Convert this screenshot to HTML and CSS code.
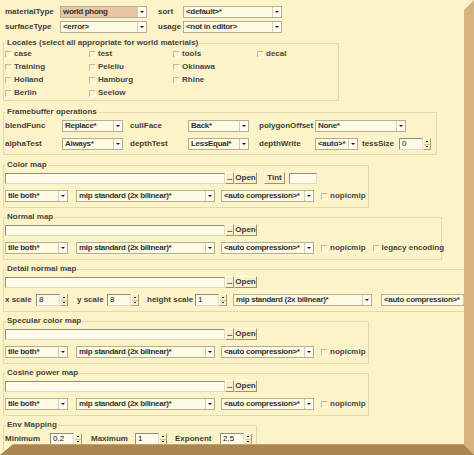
FILE: index.html
```html
<!DOCTYPE html>
<html>
<head>
<meta charset="utf-8">
<title>Material</title>
<link rel="stylesheet" href="styles.css">
</head>
<body>
<div class="window">
  <div class="content">
    <div class="top-row">
      <span class="lbl l-top">materialType</span>
      <div class="sel sel-mt hl"><span class="val">world phong</span><span class="arr"></span></div>
      <span class="lbl l-top2">sort</span>
      <div class="sel sel-sort"><span class="val">&lt;default&gt;*</span><span class="arr"></span></div>
    </div>
    <div class="top-row">
      <span class="lbl l-top">surfaceType</span>
      <div class="sel sel-mt"><span class="val">&lt;error&gt;</span><span class="arr"></span></div>
      <span class="lbl l-top2">usage</span>
      <div class="sel sel-sort"><span class="val">&lt;not in editor&gt;</span><span class="arr"></span></div>
    </div>

    <fieldset class="grp g-loc">
      <legend>Locales (select all appropriate for world materials)</legend>
      <div class="locales">
        <label class="chk"><span class="cb"></span>case</label>
        <label class="chk"><span class="cb"></span>Training</label>
        <label class="chk"><span class="cb"></span>Holland</label>
        <label class="chk"><span class="cb"></span>Berlin</label>
        <label class="chk"><span class="cb"></span>test</label>
        <label class="chk"><span class="cb"></span>Peleliu</label>
        <label class="chk"><span class="cb"></span>Hamburg</label>
        <label class="chk"><span class="cb"></span>Seelow</label>
        <label class="chk"><span class="cb"></span>tools</label>
        <label class="chk"><span class="cb"></span>Okinawa</label>
        <label class="chk"><span class="cb"></span>Rhine</label>
        <label class="chk decal"><span class="cb"></span>decal</label>
      </div>
    </fieldset>

    <fieldset class="grp g-fb">
      <legend>Framebuffer operations</legend>
      <div class="row">
        <span class="lbl l-fb1">blendFunc</span>
        <div class="sel sel-fb"><span class="val">Replace*</span><span class="arr"></span></div>
        <span class="lbl l-fb2">cullFace</span>
        <div class="sel sel-fb"><span class="val">Back*</span><span class="arr"></span></div>
        <span class="lbl l-fb3">polygonOffset</span>
        <div class="sel sel-po"><span class="val">None*</span><span class="arr"></span></div>
      </div>
      <div class="row">
        <span class="lbl l-fb1">alphaTest</span>
        <div class="sel sel-fb"><span class="val">Always*</span><span class="arr"></span></div>
        <span class="lbl l-fb2">depthTest</span>
        <div class="sel sel-fb"><span class="val">LessEqual*</span><span class="arr"></span></div>
        <span class="lbl l-fb3">depthWrite</span>
        <div class="sel sel-dw"><span class="val">&lt;auto&gt;*</span><span class="arr"></span></div>
        <span class="lbl l-tess">tessSize</span>
        <div class="spin"><span class="num">0</span><span class="sbtn"><i class="up"></i><i class="dn"></i></span></div>
      </div>
    </fieldset>

    <fieldset class="grp g-map g-first">
      <legend>Color map</legend>
      <div class="row">
        <span class="txt t-path"></span>
        <span class="btn b-dots">...</span>
        <span class="btn b-open">Open</span>
        <span class="btn b-tint">Tint</span>
        <span class="txt t-tint"></span>
      </div>
      <div class="row">
        <div class="sel sel-tile"><span class="val">tile both*</span><span class="arr"></span></div>
        <div class="sel sel-mip"><span class="val">mip standard (2x bilinear)*</span><span class="arr"></span></div>
        <div class="sel sel-comp"><span class="val">&lt;auto compression&gt;*</span><span class="arr"></span></div>
        <label class="chk c-nopic"><span class="cb"></span>nopicmip</label>
      </div>
    </fieldset>

    <fieldset class="grp g-map g-normal">
      <legend>Normal map</legend>
      <div class="row">
        <span class="txt t-path"></span>
        <span class="btn b-dots">...</span>
        <span class="btn b-open">Open</span>
      </div>
      <div class="row">
        <div class="sel sel-tile"><span class="val">tile both*</span><span class="arr"></span></div>
        <div class="sel sel-mip"><span class="val">mip standard (2x bilinear)*</span><span class="arr"></span></div>
        <div class="sel sel-comp"><span class="val">&lt;auto compression&gt;*</span><span class="arr"></span></div>
        <label class="chk c-nopic"><span class="cb"></span>nopicmip</label>
        <label class="chk c-legacy"><span class="cb"></span>legacy encoding</label>
      </div>
    </fieldset>

    <fieldset class="grp g-map g-detail">
      <legend>Detail normal map</legend>
      <div class="row">
        <span class="txt t-path"></span>
        <span class="btn b-dots">...</span>
        <span class="btn b-open">Open</span>
      </div>
      <div class="row">
        <span class="lbl l-xs">x scale</span>
        <div class="spin"><span class="num">8</span><span class="sbtn"><i class="up"></i><i class="dn"></i></span></div>
        <span class="lbl l-ys">y scale</span>
        <div class="spin"><span class="num">8</span><span class="sbtn"><i class="up"></i><i class="dn"></i></span></div>
        <span class="lbl l-hs">height scale</span>
        <div class="spin"><span class="num">1</span><span class="sbtn"><i class="up"></i><i class="dn"></i></span></div>
        <div class="sel sel-mip d-mip"><span class="val">mip standard (2x bilinear)*</span><span class="arr"></span></div>
        <div class="sel sel-comp d-comp"><span class="val">&lt;auto compression&gt;*</span><span class="arr"></span></div>
      </div>
    </fieldset>

    <fieldset class="grp g-map">
      <legend>Specular color map</legend>
      <div class="row">
        <span class="txt t-path"></span>
        <span class="btn b-dots">...</span>
        <span class="btn b-open">Open</span>
      </div>
      <div class="row">
        <div class="sel sel-tile"><span class="val">tile both*</span><span class="arr"></span></div>
        <div class="sel sel-mip"><span class="val">mip standard (2x bilinear)*</span><span class="arr"></span></div>
        <div class="sel sel-comp"><span class="val">&lt;auto compression&gt;*</span><span class="arr"></span></div>
        <label class="chk c-nopic"><span class="cb"></span>nopicmip</label>
      </div>
    </fieldset>

    <fieldset class="grp g-map">
      <legend>Cosine power map</legend>
      <div class="row">
        <span class="txt t-path"></span>
        <span class="btn b-dots">...</span>
        <span class="btn b-open">Open</span>
      </div>
      <div class="row">
        <div class="sel sel-tile"><span class="val">tile both*</span><span class="arr"></span></div>
        <div class="sel sel-mip"><span class="val">mip standard (2x bilinear)*</span><span class="arr"></span></div>
        <div class="sel sel-comp"><span class="val">&lt;auto compression&gt;*</span><span class="arr"></span></div>
        <label class="chk c-nopic"><span class="cb"></span>nopicmip</label>
      </div>
    </fieldset>

    <fieldset class="grp g-env">
      <legend>Env Mapping</legend>
      <div class="row">
        <span class="lbl l-min">Minimum</span>
        <div class="spin"><span class="num">0.2</span><span class="sbtn"><i class="up"></i><i class="dn"></i></span></div>
        <span class="lbl l-max">Maximum</span>
        <div class="spin"><span class="num">1</span><span class="sbtn"><i class="up"></i><i class="dn"></i></span></div>
        <span class="lbl l-exp">Exponent</span>
        <div class="spin"><span class="num">2.5</span><span class="sbtn"><i class="up"></i><i class="dn"></i></span></div>
      </div>
    </fieldset>
  </div>
  <div class="frame"></div>
</div>
</body>
</html>
```

FILE: styles.css
```css
* { box-sizing: border-box; }
html, body { margin: 0; padding: 0; }
body {
  background: #fdf3c8;
  font: bold 8px/10px "Liberation Sans", Arial, sans-serif;
  color: #3e3e3e;
  overflow: hidden;
}
.window {
  position: relative;
  width: 474px;
  height: 455px;
  overflow: hidden;
}
.content { padding-top: 6px; }

/* top rows */
.top-row {
  display: flex;
  align-items: center;
  height: 12px;
  padding-left: 5px;
}
.top-row + .top-row { margin-top: 3px; }
.lbl { flex: none; white-space: nowrap; }
.l-top { width: 55px; }
.l-top2 { width: 25px; margin-left: 11px; }
.sel-mt { width: 87px; }
.sel-sort { width: 99px; }

/* controls */
.sel {
  flex: none;
  display: flex;
  height: 12px;
  border: 1px solid #b6ae94;
  background: #fffbe3;
}
.sel .val {
  flex: 1;
  min-width: 0;
  padding-left: 2px;
  line-height: 10px;
  letter-spacing: -0.3px;
  white-space: nowrap;
  overflow: hidden;
  color: #333;
}
.sel.hl .val { background: #e7c7a1; }
.sel .arr {
  flex: none;
  width: 9px;
  border-left: 1px solid #d6cdb2;
  background: #fffdf2;
  display: flex;
  align-items: center;
  justify-content: center;
}
.sel .arr::after {
  content: "";
  border-left: 2px solid transparent;
  border-right: 2px solid transparent;
  border-top: 2px solid #111;
}
.txt {
  flex: none;
  height: 11px;
  border: 1px solid;
  border-color: #8e8e86 #dedad0 #dedad0 #8e8e86;
  background: #fffbe8;
}
.btn {
  flex: none;
  height: 12px;
  line-height: 10px;
  text-align: center;
  border: 1px solid;
  border-color: #fffbea #9e9274 #9e9274 #fffbea;
  background: #faf0c3;
  color: #3a3a3a;
}
.chk {
  display: flex;
  align-items: center;
  white-space: nowrap;
  color: #474747;
}
.cb {
  flex: none;
  width: 7px;
  height: 7px;
  margin-right: 2px;
  border: 1px solid;
  border-color: #c4bc9f #fffef6 #fffef6 #c4bc9f;
}
.spin { flex: none; display: flex; height: 12px; }
.spin .num {
  width: 24px;
  border: 1px solid;
  border-color: #8e8e86 #dedad0 #dedad0 #8e8e86;
  background: #fffbe8;
  padding-left: 2px;
  line-height: 10px;
  font-weight: normal;
  color: #111;
}
.sbtn {
  width: 8px;
  display: flex;
  flex-direction: column;
  border: 1px solid;
  border-color: #fffbea #a89c7e #a89c7e #fffbea;
  background: #faf0c3;
}
.sbtn i {
  flex: 1;
  display: flex;
  align-items: center;
  justify-content: center;
}
.sbtn i + i { border-top: 1px solid #cfc4a4; }
.sbtn i::after {
  content: "";
  width: 2px;
  height: 1px;
  background: #222;
}

/* group boxes */
.grp {
  margin: 4px 0 0 3px;
  border: 1px solid #e5d8a9;
  padding: 2px 4px 5px 1px;
  min-width: 0;
}
.grp legend {
  padding: 0 1px;
  margin-left: 1px;
  line-height: 10px;
  color: #454545;
}
.row {
  display: flex;
  align-items: center;
  height: 12px;
}
.row + .row { margin-top: 6px; }

/* locales */
.g-loc { width: 336px; margin-top: 5px; padding: 0 0 1px 1px; }
.locales {
  display: grid;
  grid-auto-flow: column;
  grid-template-rows: repeat(4, 12px);
  grid-template-columns: repeat(4, 84px);
  row-gap: 1px;
}
.locales .decal { grid-column: 4; grid-row: 1; }

/* framebuffer */
.g-fb { width: 434px; margin-top: 6px; padding: 3px 0 4px 1px; }
.l-fb1 { width: 57px; }
.l-fb2 { width: 58px; margin-left: 7px; }
.l-fb3 { width: 56px; margin-left: 10px; }
.sel-fb { width: 61px; }
.sel-po { width: 91px; }
.sel-dw { width: 43px; }
.l-tess { width: 37px; margin-left: 4px; }

/* map groups */
.g-map { width: 366px; }
.g-first { margin-top: 5px; }
.g-normal { width: 439px; }
.g-detail { width: 490px; }
.t-path { width: 220px; }
.b-dots { width: 9px; letter-spacing: -0.5px; }
.b-open { width: 23px; }
.b-tint { width: 21px; margin-left: 7px; }
.t-tint { width: 28px; margin-left: 4px; }
.sel-tile { width: 63px; }
.sel-mip { width: 139px; margin-left: 8px; }
.sel-comp { width: 93px; margin-left: 6px; }
.c-nopic { margin-left: 7px; }
.c-legacy { margin-left: 7px; }

.l-xs { width: 31px; }
.l-ys { width: 30px; margin-left: 9px; }
.l-hs { width: 48px; margin-left: 8px; }
.d-mip { margin-left: 6px; }
.d-comp { width: 92px; margin-left: 9px; }

/* env mapping */
.g-env { width: 254px; padding-top: 3px; }
.l-min { width: 45px; }
.l-max { width: 44px; margin-left: 9px; }
.l-exp { width: 45px; margin-left: 8px; }

/* bevelled window frame drawn over the content */
.frame {
  position: absolute;
  inset: 0;
  border-style: solid;
  border-width: 10px 10px 10px 12px;
  border-color: transparent #d7b47e #a98550 transparent;
  box-shadow: inset 0 -1px 0 #c6a36d;
  pointer-events: none;
}
```
